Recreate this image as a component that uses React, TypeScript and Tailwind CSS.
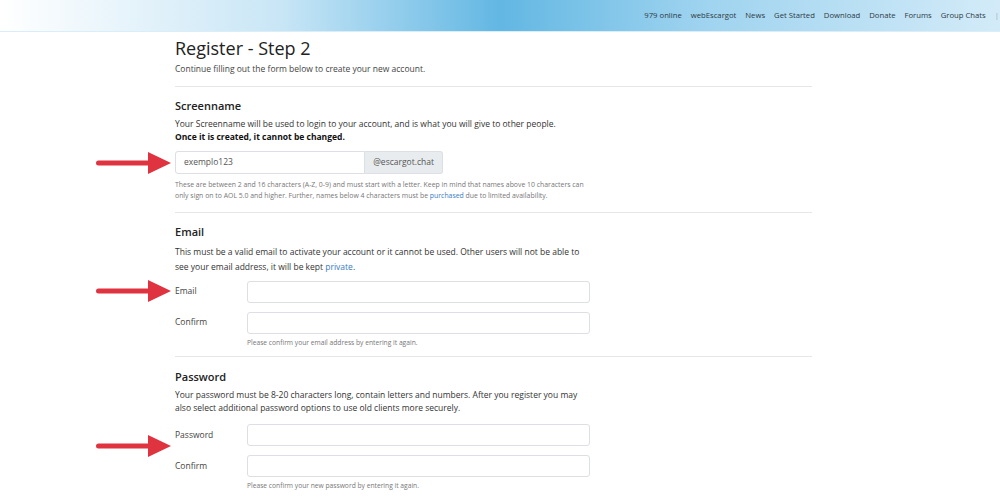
const font = { fontFamily: '"Open Sans", "Noto Sans", sans-serif' };

const navItems = ["979 online", "webEscargot", "News", "Get Started", "Download", "Donate", "Forums", "Group Chats"];

function Arrow({ top }: { top: number }) {
  return (
    <svg
      className="absolute left-[94px]"
      style={{ top }}
      width="78"
      height="24"
      viewBox="0 0 78 24"
    >
      <rect x="2" y="9.5" width="56" height="5" rx="2.5" fill="#e03340" />
      <polygon points="54,1 77,12 54,23" fill="#e03340" />
    </svg>
  );
}

function Field({ label }: { label: string }) {
  return (
    <div className="flex items-center">
      <div className="w-[72px] text-[8.5px] text-[#444]">{label}</div>
      <div className="h-[22px] w-[343px] rounded-[3px] border border-[#dcdfe3] bg-white" />
    </div>
  );
}

export default function App() {
  return (
    <div className="relative h-[500px] w-[1000px] overflow-hidden bg-white text-[#333]" style={font}>
      <header className="flex h-[32px] items-center justify-end border-b border-[#d9eef9] bg-[linear-gradient(90deg,#ffffff_0%,#c9e6f6_28%,#62b7e3_50%,#9ed3ef_70%,#d3ebf8_100%)] pr-[1px]">
        <nav className="flex items-center gap-[9px] text-[7.7px] text-[#2d3a44]">
          {navItems.map((n) => (
            <span key={n}>{n}</span>
          ))}
          <span className="text-[#9aa8b2]">|</span>
        </nav>
      </header>

      <main className="ml-[175px] w-[637px]">
        <h1 className="mt-[4px] text-[18px] font-medium leading-[24px] text-[#222]">Register - Step 2</h1>
        <p className="mt-[3px] text-[8.5px] text-[#444]">Continue filling out the form below to create your new account.</p>
        <hr className="mt-[10px] border-[#e6e6e6]" />

        <section className="pt-[11px] pb-[11px]">
          <h2 className="text-[11px] font-semibold text-[#222]">Screenname</h2>
          <p className="mt-[3px] text-[8.5px] leading-[13px] text-[#333]">
            Your Screenname will be used to login to your account, and is what you will give to other people.
            <br />
            <b className="font-bold text-[#111]">Once it is created, it cannot be changed.</b>
          </p>
          <div className="mt-[8px] flex h-[23px] w-[268px]">
            <div className="flex flex-1 items-center rounded-l-[3px] border border-[#dcdfe3] pl-[8px] text-[8.5px] text-[#555]">
              exemplo123
            </div>
            <div className="flex items-center rounded-r-[3px] border border-l-0 border-[#dcdfe3] bg-[#e9ecef] px-[8px] text-[8.5px] text-[#555]">
              @escargot.chat
            </div>
          </div>
          <p className="mt-[5px] text-[6.9px] leading-[11px] text-[#777]">
            These are between 2 and 16 characters (A-Z, 0-9) and must start with a letter. Keep in mind that names above 10 characters can
            <br />
            only sign on to AOL 5.0 and higher. Further, names below 4 characters must be{" "}
            <span className="text-[#3a7cc4]">purchased</span> due to limited availability.
          </p>
        </section>
        <hr className="border-[#e6e6e6]" />

        <section className="pt-[11px] pb-[8px]">
          <h2 className="text-[11px] font-semibold text-[#222]">Email</h2>
          <p className="mt-[3px] text-[8.5px] leading-[15px] text-[#333]">
            This must be a valid email to activate your account or it cannot be used. Other users will not be able to
            <br />
            see your email address, it will be kept <span className="text-[#3a7cc4]">private</span>.
          </p>
          <div className="mt-[7px] flex flex-col gap-[9px]">
            <Field label="Email" />
            <Field label="Confirm" />
          </div>
          <p className="ml-[72px] mt-[4px] text-[6.7px] text-[#777]">Please confirm your email address by entering it again.</p>
        </section>
        <hr className="border-[#e6e6e6]" />

        <section className="pt-[12px]">
          <h2 className="text-[11px] font-semibold text-[#222]">Password</h2>
          <p className="mt-[3px] text-[8.5px] leading-[13px] text-[#333]">
            Your password must be 8-20 characters long, contain letters and numbers. After you register you may
            <br />
            also select additional password options to use old clients more securely.
          </p>
          <div className="mt-[10px] flex flex-col gap-[9px]">
            <Field label="Password" />
            <Field label="Confirm" />
          </div>
          <p className="ml-[72px] mt-[4px] text-[6.7px] text-[#777]">Please confirm your new password by entering it again.</p>
        </section>
      </main>

      <Arrow top={151} />
      <Arrow top={279} />
      <Arrow top={434} />
    </div>
  );
}
